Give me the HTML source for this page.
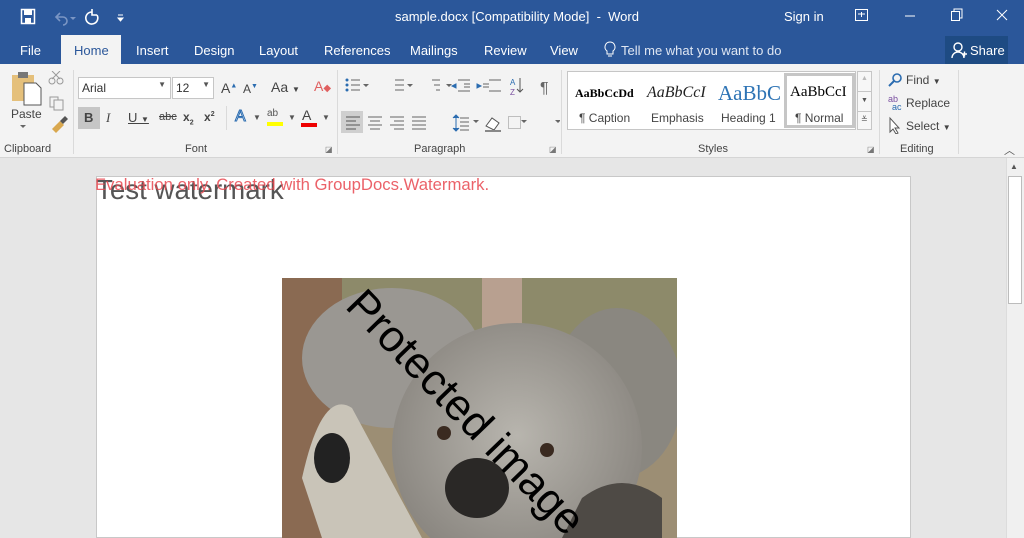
<!DOCTYPE html>
<html><head><style>
*{margin:0;padding:0;box-sizing:border-box}
html,body{width:1024px;height:538px;overflow:hidden}
body{font-family:"Liberation Sans",sans-serif;background:#e6e6e6;position:relative}
#w{position:absolute;left:0;top:0;width:1024px;height:538px;overflow:hidden}
.a{position:absolute;white-space:nowrap}
.t{color:#fff;font-size:13px}
.r{color:#444;font-size:12px}
.g{color:#444;font-size:11px}
.sep{position:absolute;top:70px;width:1px;height:84px;background:#dadada}
</style></head><body><div id="w">
<div class="a" style="left:0;top:0;width:1024px;height:64px;background:#2b579a"></div>
<svg class="a" style="left:20px;top:8px" width="110" height="18">
<rect x="1.5" y="1.5" width="13" height="14" fill="none" stroke="#fff" stroke-width="1.5"/><rect x="4" y="2" width="8" height="5" fill="#fff"/><rect x="5" y="10" width="6" height="5" fill="#fff"/>
<path d="M40 5 l-4 4 l4 4 M36 9 h7 a4 4 0 0 1 0 8" stroke="#7b96c4" stroke-width="1.6" fill="none"/>
<path d="M50 9 l3 3 l3 -3" fill="#7b96c4"/>
<path d="M72 4 a6 6 0 1 0 5 3 M72 1 v6 h5" stroke="#fff" stroke-width="1.6" fill="none"/>
<path d="M98 7 h5 M98 10 l2.5 3 l2.5 -3z" stroke="#fff" fill="#fff"/>
</svg>
<div class="a t" style="left:395px;top:9px">sample.docx [Compatibility Mode]&nbsp; - &nbsp;Word</div>
<div class="a t" style="left:784px;top:9px">Sign in</div>
<svg class="a" style="left:852px;top:6px" width="172" height="20">
<rect x="3.5" y="3.5" width="12" height="11" fill="none" stroke="#fff"/><path d="M6 8 h7 M9.5 11 v-5" stroke="#fff"/>
<path d="M53 10 h10" stroke="#fff"/>
<rect x="99.5" y="5.5" width="8" height="9" fill="none" stroke="#fff"/><path d="M102 5 v-2 h8 v9 h-2" stroke="#fff" fill="none"/>
<path d="M145 4 l10 10 M155 4 l-10 10" stroke="#fff"/>
</svg>
<div class="a" style="left:61px;top:35px;width:60px;height:30px;background:#f3f3f3"></div>
<div class="a t" style="left:20px;top:43px">File</div>
<div class="a" style="left:74px;top:43px;font-size:13px;color:#2b579a">Home</div>
<div class="a t" style="left:136px;top:43px">Insert</div>
<div class="a t" style="left:194px;top:43px">Design</div>
<div class="a t" style="left:259px;top:43px">Layout</div>
<div class="a t" style="left:324px;top:43px">References</div>
<div class="a t" style="left:410px;top:43px">Mailings</div>
<div class="a t" style="left:484px;top:43px">Review</div>
<div class="a t" style="left:550px;top:43px">View</div>
<svg class="a" style="left:603px;top:41px" width="14" height="18"><path d="M7 1 a5 5 0 0 1 3 9 v3 h-6 v-3 a5 5 0 0 1 3 -9z M5 15 h4" stroke="#fff" fill="none"/></svg>
<div class="a t" style="left:621px;top:43px;color:#dfe6f2">Tell me what you want to do</div>
<div class="a" style="left:945px;top:36px;width:63px;height:28px;background:#1e4b83"></div>
<svg class="a" style="left:951px;top:41px" width="16" height="18"><circle cx="7" cy="6" r="4" fill="none" stroke="#fff" stroke-width="1.4"/><path d="M1 17 a6 6 0 0 1 12 0 M11 13 h5 M13.5 10.5 v5" stroke="#fff" stroke-width="1.4" fill="none"/></svg>
<div class="a t" style="left:970px;top:43px">Share</div>

<div class="a" style="left:0;top:64px;width:1024px;height:94px;background:#f3f3f3;border-bottom:1px solid #d5d5d5"></div>
<svg class="a" style="left:10px;top:71px" width="60" height="62">
<rect x="2" y="4" width="22" height="26" fill="#e5c07b"/><rect x="8" y="1" width="10" height="6" fill="#777"/>
<path d="M14 12 h12 l5 5 v17 h-17z" fill="#fff" stroke="#555"/>
<circle cx="42" cy="10" r="3" fill="none" stroke="#999"/><circle cx="50" cy="10" r="3" fill="none" stroke="#999"/><path d="M42 8 l8 -8 M50 8 l-8 -8" stroke="#999"/>
<rect x="40" y="26" width="8" height="10" fill="none" stroke="#999"/><rect x="44" y="29" width="9" height="10" fill="#f3f3f3" stroke="#999"/>
<path d="M42 58 l8 -8 l4 4 l-8 8z" fill="#d9a84f"/><path d="M50 50 l5 -5 l3 3 l-5 5z" fill="#555"/>
</svg>
<div class="a r" style="left:11px;top:107px">Paste</div>
<svg class="a" style="left:20px;top:125px" width="8" height="4"><path d="M0 0 h6 l-3 3z" fill="#666"/></svg>
<div class="a g" style="left:4px;top:143px">Clipboard</div>
<div class="sep" style="left:73px"></div>
<div class="a" style="left:78px;top:77px;width:93px;height:22px;background:#fff;border:1px solid #c6c6c6;font-size:12px;color:#333;padding:3px 3px">Arial<span style="position:absolute;right:4px;top:2px;font-size:8px;color:#555">▼</span></div>
<div class="a" style="left:172px;top:77px;width:42px;height:22px;background:#fff;border:1px solid #c6c6c6;font-size:12px;color:#333;padding:3px 3px">12<span style="position:absolute;right:3px;top:2px;font-size:8px;color:#555">▼</span></div>
<div class="a" style="left:221px;top:80px;font-size:14px;color:#444">A<sup style="font-size:7px;color:#2b6cb0">▲</sup></div>
<div class="a" style="left:243px;top:82px;font-size:12px;color:#444">A<sup style="font-size:7px;color:#2b6cb0">▼</sup></div>
<div class="a" style="left:271px;top:79px;font-size:14px;color:#444">Aa <span style="font-size:8px">▼</span></div>
<div class="a" style="left:314px;top:78px;font-size:14px;color:#e06060">A<span style="font-size:10px">◆</span></div>
<div class="a" style="left:78px;top:107px;width:22px;height:22px;background:#c6c6c6"></div>
<div class="a" style="left:84px;top:110px;font-size:13px;font-weight:bold;color:#444">B</div>
<div class="a" style="left:106px;top:110px;font-size:13px;font-style:italic;font-family:'Liberation Serif',serif;color:#444">I</div>
<div class="a" style="left:128px;top:110px;font-size:13px;text-decoration:underline;color:#444">U <span style="font-size:8px">▼</span></div>
<div class="a" style="left:159px;top:111px;font-size:11px;text-decoration:line-through;color:#444">abc</div>
<div class="a" style="left:183px;top:110px;font-size:12px;font-weight:bold;color:#444">x<sub style="font-size:7px">2</sub></div>
<div class="a" style="left:204px;top:110px;font-size:12px;font-weight:bold;color:#444">x<sup style="font-size:7px">2</sup></div>
<div class="sep" style="left:226px;top:106px;height:24px"></div>
<div class="a" style="left:235px;top:108px;font-size:16px;color:#fff;-webkit-text-stroke:1px #2b6cb0">A</div><div class="a" style="left:253px;top:113px;font-size:8px;color:#555">▼</div>
<div class="a" style="left:267px;top:108px;font-size:10px;color:#555">ab</div><div class="a" style="left:267px;top:122px;width:16px;height:4px;background:#ffff00"></div><div class="a" style="left:288px;top:113px;font-size:8px;color:#555">▼</div>
<div class="a" style="left:302px;top:107px;font-size:14px;color:#444">A</div><div class="a" style="left:301px;top:123px;width:16px;height:4px;background:#e00"></div><div class="a" style="left:322px;top:113px;font-size:8px;color:#555">▼</div>
<div class="a g" style="left:185px;top:143px">Font</div>
<div class="a" style="left:325px;top:145px;font-size:8px;color:#777">◪</div>
<div class="sep" style="left:337px"></div>
<svg class="a" style="left:340px;top:74px" width="220" height="60">
<g fill="#2b6cb0"><circle cx="7" cy="6" r="1.5"/><circle cx="7" cy="11" r="1.5"/><circle cx="7" cy="16" r="1.5"/></g>
<g stroke="#666"><path d="M11 6 h9 M11 11 h9 M11 16 h9"/><path d="M55 6 h9 M55 11 h9 M55 16 h9 M92 6 h8 M94 11 h6 M96 16 h4"/>
<path d="M118 6 h12 M124 10 h6 M124 13 h6 M118 17 h12 M149 6 h12 M143 10 h6 M143 13 h6 M149 17 h12"/>
<path d="M6 43 h14 M6 47 h10 M6 51 h14 M6 55 h10 M28 43 h14 M30 47 h10 M28 51 h14 M30 55 h10 M50 43 h14 M54 47 h10 M50 51 h14 M54 55 h10 M72 43 h14 M72 47 h14 M72 51 h14 M72 55 h14"/>
<path d="M120 44 h9 M120 48 h9 M120 52 h9 M120 56 h9"/></g>
<rect x="1" y="37" width="22" height="22" fill="#c6c6c6" opacity=".8"/><path d="M6 43 h14 M6 47 h10 M6 51 h14 M6 55 h10" stroke="#555"/>
<path d="M23 10 l3 3 l3 -3z M67 10 l3 3 l3 -3z M106 10 l3 3 l3 -3z M133 46 l3 3 l3 -3z M181 46 l3 3 l3 -3z M215 46 l3 3 l3 -3z" fill="#666"/>
<path d="M116 10 l-4 2 l4 2z M137 10 l4 2 l-4 2z M116 41 v16 M113 44 l3 -3 l3 3 M113 54 l3 3 l3 -3" fill="#2b6cb0" stroke="#2b6cb0"/>
<text x="170" y="11" font-size="8" fill="#2b6cb0" font-family="Liberation Sans">A</text><text x="170" y="21" font-size="8" fill="#7a4fa0" font-family="Liberation Sans">Z</text><path d="M180 4 v14 M177 15 l3 3 l3 -3" stroke="#555" fill="none"/>
<text x="200" y="19" font-size="16" fill="#666" font-family="Liberation Sans">¶</text>
<path d="M146 52 l6 -8 l7 5 l-5 7z" fill="#fff" stroke="#555"/><path d="M145 57 h16" stroke="#888" stroke-width="2"/>
<rect x="168.5" y="42.5" width="12" height="12" fill="none" stroke="#888" stroke-dasharray="1 1"/>
</svg>
<div class="a g" style="left:414px;top:143px">Paragraph</div>
<div class="a" style="left:549px;top:145px;font-size:8px;color:#777">◪</div>
<div class="sep" style="left:561px"></div>
<div class="a" style="left:567px;top:71px;width:289px;height:59px;background:#fff;border:1px solid #c6c6c6"></div>
<div class="a" style="left:575px;top:86px;font-family:'Liberation Serif',serif;font-size:12px;font-weight:bold;color:#000">AaBbCcDd</div>
<div class="a" style="left:647px;top:84px;font-family:'Liberation Serif',serif;font-size:16px;font-style:italic;color:#222">AaBbCcI</div>
<div class="a" style="left:718px;top:81px;font-family:'Liberation Serif',serif;font-size:21px;color:#2e74b5">AaBbC</div>
<div class="a" style="left:784px;top:73px;width:71px;height:55px;border:3px solid #c6c6c6"></div>
<div class="a" style="left:790px;top:84px;font-family:'Liberation Serif',serif;font-size:15px;color:#000">AaBbCcI</div>
<div class="a r" style="left:579px;top:111px">¶ Caption</div>
<div class="a r" style="left:651px;top:111px">Emphasis</div>
<div class="a r" style="left:721px;top:111px">Heading 1</div>
<div class="a r" style="left:795px;top:111px">¶ Normal</div>
<div class="a" style="left:857px;top:71px;width:15px;height:59px;border:1px solid #c6c6c6;background:#f7f7f7"></div>
<div class="a" style="left:857px;top:91px;width:15px;height:1px;background:#c6c6c6"></div><div class="a" style="left:857px;top:111px;width:15px;height:1px;background:#c6c6c6"></div>
<div class="a" style="left:861px;top:75px;font-size:7px;color:#bbb">▲</div><div class="a" style="left:861px;top:97px;font-size:7px;color:#555">▼</div><div class="a" style="left:861px;top:115px;font-size:8px;color:#555">≚</div>
<div class="a g" style="left:698px;top:143px">Styles</div>
<div class="a" style="left:867px;top:145px;font-size:8px;color:#777">◪</div>
<div class="sep" style="left:879px"></div>
<svg class="a" style="left:886px;top:72px" width="20" height="62"><circle cx="11" cy="6" r="4" fill="none" stroke="#2b6cb0" stroke-width="1.6"/><path d="M8 9 l-5 5" stroke="#2b6cb0" stroke-width="2"/>
<text x="2" y="30" font-size="9" fill="#7a4fa0" font-family="Liberation Sans">ab</text><text x="6" y="38" font-size="9" fill="#2b6cb0" font-family="Liberation Sans">ac</text>
<path d="M4 46 v14 l3 -3 l3 5 l2 -1 l-3 -5 h4z" fill="#fff" stroke="#555"/></svg>
<div class="a r" style="left:906px;top:73px">Find <span style="font-size:8px">▼</span></div>
<div class="a r" style="left:906px;top:96px">Replace</div>
<div class="a r" style="left:906px;top:119px">Select <span style="font-size:8px">▼</span></div>
<div class="a g" style="left:900px;top:143px">Editing</div>
<div class="sep" style="left:958px"></div>
<div class="a" style="left:1004px;top:142px;font-size:11px;color:#555">︿</div>

<div class="a" style="left:96px;top:176px;width:815px;height:362px;background:#fff;border:1px solid #c8c8c8"></div>
<div class="a" style="left:96px;top:174px;font-size:27.7px;color:#555">Test watermark</div>
<div class="a" style="left:95px;top:175px;font-size:16.7px;color:#e8474f;opacity:.85">Evaluation only. Created with GroupDocs.Watermark.</div>
<svg class="a" style="left:282px;top:278px" width="395" height="260">
<defs><radialGradient id="fur" cx="50%" cy="45%" r="60%"><stop offset="0" stop-color="#b8b5ae"/><stop offset="1" stop-color="#85817b"/></radialGradient></defs>
<rect width="395" height="260" fill="#9c8e74"/>
<rect x="0" y="0" width="395" height="130" fill="#8d8a6a"/>
<rect x="0" y="0" width="60" height="260" fill="#8a6a52"/>
<rect x="200" y="0" width="40" height="60" fill="#b8a090"/>
<ellipse cx="110" cy="80" rx="90" ry="70" fill="#9a9792"/>
<ellipse cx="335" cy="115" rx="65" ry="85" fill="#8a8780"/>
<ellipse cx="235" cy="170" rx="125" ry="125" fill="url(#fur)"/>
<path d="M20 200 q20 -90 50 -70 l70 130 h-100z" fill="#c9c4b8"/>
<ellipse cx="50" cy="180" rx="18" ry="25" fill="#222"/>
<ellipse cx="195" cy="210" rx="32" ry="30" fill="#2a2826"/>
<circle cx="162" cy="155" r="7" fill="#3a2a20"/><circle cx="265" cy="172" r="7" fill="#3a2a20"/>
<path d="M300 220 q40 -30 80 0 v40 h-100z" fill="#4e4a45"/>
</svg>
<div class="a" style="left:372px;top:280px;font-size:44px;color:#000;transform-origin:0 0;transform:rotate(46deg)">Protected image</div>
<div class="a" style="left:1006px;top:158px;width:18px;height:380px;background:#f0f0f0;border-left:1px solid #dcdcdc"></div>
<div class="a" style="left:1010px;top:162px;font-size:8px;color:#555">▲</div>
<div class="a" style="left:1008px;top:176px;width:14px;height:128px;background:#fff;border:1px solid #bcbcbc"></div>
</div></body></html>
